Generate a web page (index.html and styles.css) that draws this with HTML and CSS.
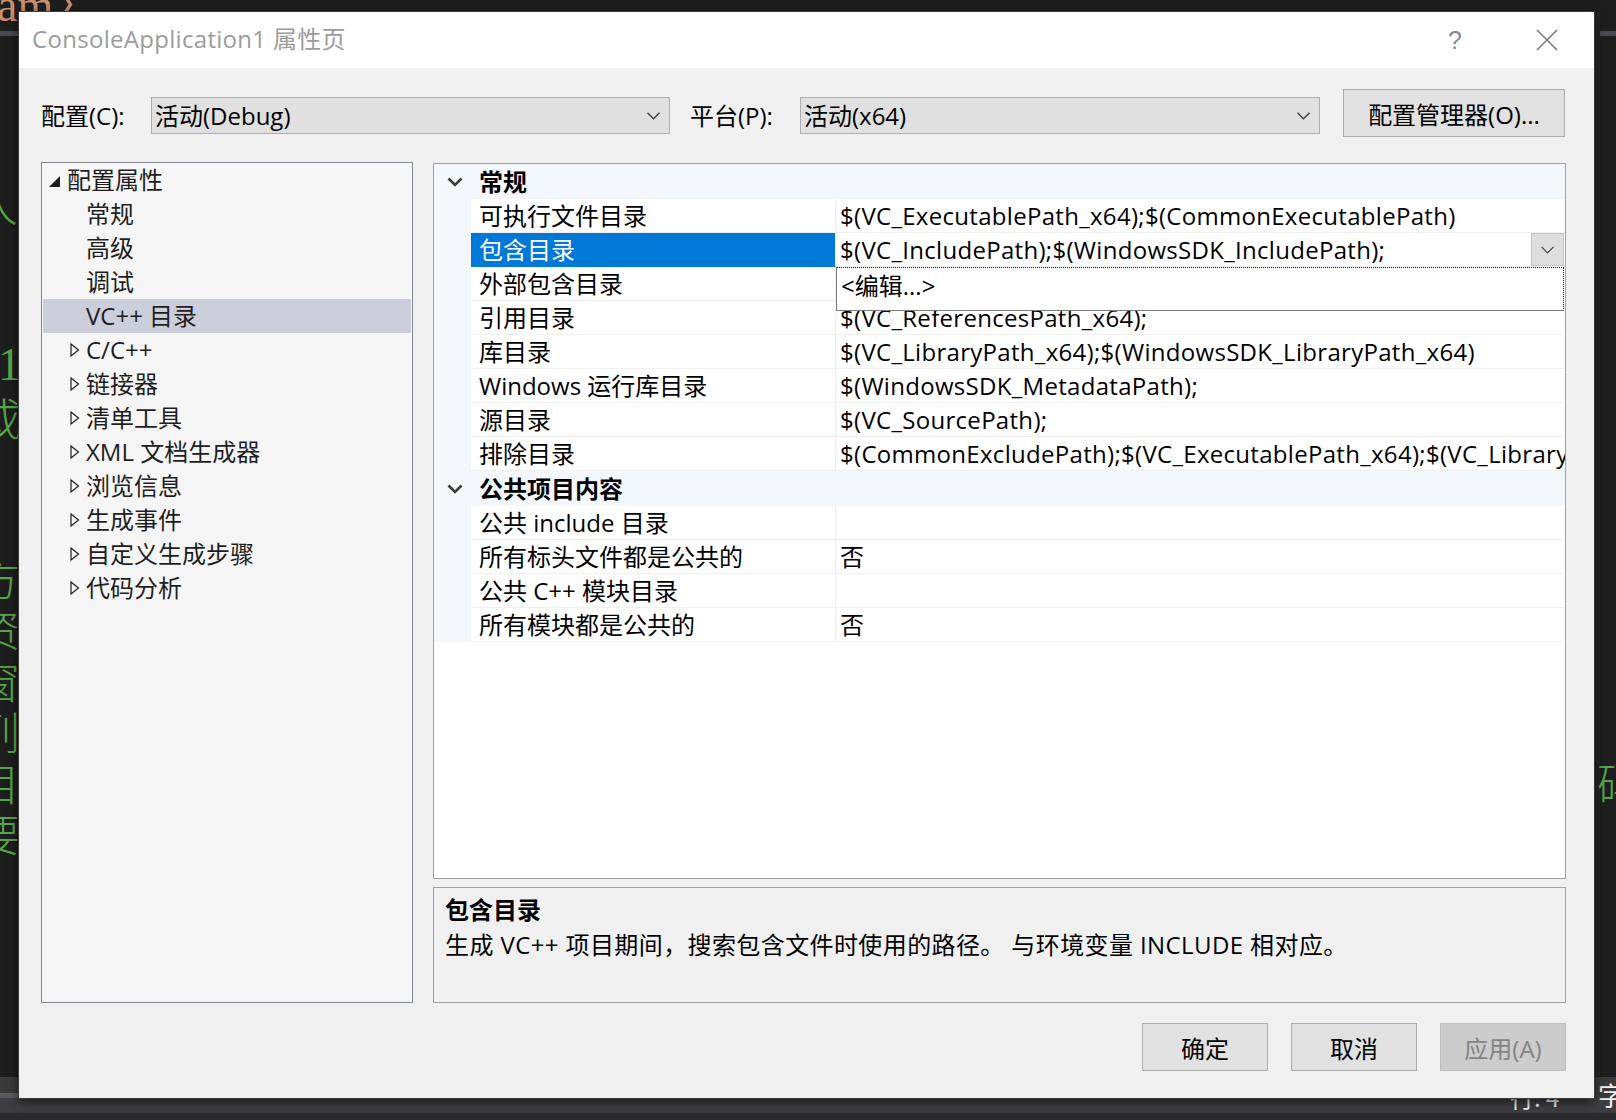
FILE: index.html
```html
<!DOCTYPE html>
<html lang="zh-CN">
<head>
<meta charset="utf-8">
<title>ConsoleApplication1 属性页</title>
<link rel="stylesheet" href="styles.css">
</head>
<body>
<div class="desktop">
  <div class="editor">
    <span class="crumb">am〉</span>
    <div class="tabline tabline-left"></div>
    <div class="tabline tabline-right"></div>
    <div class="rightcol"></div>
    <span class="gch" style="top:178px;left:-26px">人</span>
    <span class="gch lat" style="top:340px;left:-2px">1</span>
    <span class="gch" style="top:392px;left:-22px">或</span>
    <span class="gch" style="top:552px;left:-24px">方</span>
    <span class="gch" style="top:603px;left:-24px">资</span>
    <span class="gch" style="top:655px;left:-24px">窗</span>
    <span class="gch" style="top:706px;left:-24px">列</span>
    <span class="gch" style="top:757px;left:-24px">目</span>
    <span class="gch" style="top:808px;left:-24px">要</span>
    <span class="gch" style="top:757px;left:1597px">码</span>
    <div class="hscroll"><div class="thumb"></div></div>
    <div class="statusbar">
      <span class="st-line">行: 4</span>
      <span class="st-char">字</span>
    </div>
  </div>

  <div class="dialog">
    <div class="titlebar">
      <span class="title">ConsoleApplication1 属性页</span>
      <span class="help">?</span>
      <span class="close"><svg width="22" height="22" viewBox="0 0 22 22"><path d="M1 1 L21 21 M21 1 L1 21" stroke="#7a7a7a" stroke-width="1.6" fill="none"/></svg></span>
    </div>

    <div class="body">
      <div class="config-row">
        <span class="lbl">配置(C):</span>
        <div class="combo combo-1"><span>活动(Debug)</span><svg class="caret" width="13" height="8" viewBox="0 0 13 8"><polyline points="0.5,0.8 6.5,6.8 12.5,0.8" fill="none" stroke="#3a3a3a" stroke-width="1.3"/></svg></div>
        <span class="lbl lbl-2">平台(P):</span>
        <div class="combo combo-2"><span>活动(x64)</span><svg class="caret" width="13" height="8" viewBox="0 0 13 8"><polyline points="0.5,0.8 6.5,6.8 12.5,0.8" fill="none" stroke="#3a3a3a" stroke-width="1.3"/></svg></div>
        <button class="btn btn-cfg">配置管理器(O)...</button>
      </div>

      <div class="main">
        <div class="tree">
          <div class="trow l0"><svg class="tri-open" width="11" height="11" viewBox="0 0 11 11"><polygon points="11,0 11,11 0,11" fill="#1e1e1e"/></svg><span>配置属性</span></div>
          <div class="trow l1 leaf"><span>常规</span></div>
          <div class="trow l1 leaf"><span>高级</span></div>
          <div class="trow l1 leaf"><span>调试</span></div>
          <div class="trow l1 leaf sel"><span>VC++ 目录</span></div>
          <div class="trow l1"><svg class="tri" width="10" height="14" viewBox="0 0 10 14"><polygon points="1,1 8.5,7 1,13" fill="none" stroke="#1e1e1e" stroke-width="1.2"/></svg><span>C/C++</span></div>
          <div class="trow l1"><svg class="tri" width="10" height="14" viewBox="0 0 10 14"><polygon points="1,1 8.5,7 1,13" fill="none" stroke="#1e1e1e" stroke-width="1.2"/></svg><span>链接器</span></div>
          <div class="trow l1"><svg class="tri" width="10" height="14" viewBox="0 0 10 14"><polygon points="1,1 8.5,7 1,13" fill="none" stroke="#1e1e1e" stroke-width="1.2"/></svg><span>清单工具</span></div>
          <div class="trow l1"><svg class="tri" width="10" height="14" viewBox="0 0 10 14"><polygon points="1,1 8.5,7 1,13" fill="none" stroke="#1e1e1e" stroke-width="1.2"/></svg><span>XML 文档生成器</span></div>
          <div class="trow l1"><svg class="tri" width="10" height="14" viewBox="0 0 10 14"><polygon points="1,1 8.5,7 1,13" fill="none" stroke="#1e1e1e" stroke-width="1.2"/></svg><span>浏览信息</span></div>
          <div class="trow l1"><svg class="tri" width="10" height="14" viewBox="0 0 10 14"><polygon points="1,1 8.5,7 1,13" fill="none" stroke="#1e1e1e" stroke-width="1.2"/></svg><span>生成事件</span></div>
          <div class="trow l1"><svg class="tri" width="10" height="14" viewBox="0 0 10 14"><polygon points="1,1 8.5,7 1,13" fill="none" stroke="#1e1e1e" stroke-width="1.2"/></svg><span>自定义生成步骤</span></div>
          <div class="trow l1"><svg class="tri" width="10" height="14" viewBox="0 0 10 14"><polygon points="1,1 8.5,7 1,13" fill="none" stroke="#1e1e1e" stroke-width="1.2"/></svg><span>代码分析</span></div>
        </div>

        <div class="right">
          <div class="grid">
            <div class="grow head">
              <div class="gut"><svg width="16" height="10" viewBox="0 0 16 10"><polyline points="1.5,1.5 8,8 14.5,1.5" fill="none" stroke="#3c3c3c" stroke-width="2.6"/></svg></div>
              <div class="hname">常规</div>
            </div>
            <div class="grow"><div class="gut"></div><div class="name">可执行文件目录</div><div class="val">$(VC_ExecutablePath_x64);$(CommonExecutablePath)</div></div>
            <div class="grow"><div class="gut"></div><div class="name selected">包含目录</div><div class="val"><span class="vtext">$(VC_IncludePath);$(WindowsSDK_IncludePath);</span><span class="ddbtn"><svg width="13" height="8" viewBox="0 0 13 8"><polyline points="0.5,0.8 6.5,6.8 12.5,0.8" fill="none" stroke="#444" stroke-width="1.2"/></svg></span></div></div>
            <div class="grow"><div class="gut"></div><div class="name">外部包含目录</div><div class="val">$(VC_IncludePath);$(WindowsSDK_IncludePath);</div></div>
            <div class="grow"><div class="gut"></div><div class="name">引用目录</div><div class="val">$(VC_ReferencesPath_x64);</div></div>
            <div class="grow"><div class="gut"></div><div class="name">库目录</div><div class="val">$(VC_LibraryPath_x64);$(WindowsSDK_LibraryPath_x64)</div></div>
            <div class="grow"><div class="gut"></div><div class="name">Windows 运行库目录</div><div class="val">$(WindowsSDK_MetadataPath);</div></div>
            <div class="grow"><div class="gut"></div><div class="name">源目录</div><div class="val">$(VC_SourcePath);</div></div>
            <div class="grow"><div class="gut"></div><div class="name">排除目录</div><div class="val">$(CommonExcludePath);$(VC_ExecutablePath_x64);$(VC_LibraryPath_x64);</div></div>
            <div class="grow head">
              <div class="gut"><svg width="16" height="10" viewBox="0 0 16 10"><polyline points="1.5,1.5 8,8 14.5,1.5" fill="none" stroke="#3c3c3c" stroke-width="2.6"/></svg></div>
              <div class="hname">公共项目内容</div>
            </div>
            <div class="grow"><div class="gut"></div><div class="name">公共 include 目录</div><div class="val"></div></div>
            <div class="grow"><div class="gut"></div><div class="name">所有标头文件都是公共的</div><div class="val">否</div></div>
            <div class="grow"><div class="gut"></div><div class="name">公共 C++ 模块目录</div><div class="val"></div></div>
            <div class="grow"><div class="gut"></div><div class="name">所有模块都是公共的</div><div class="val">否</div></div>

            <div class="popup"><span>&lt;编辑...&gt;</span></div>
          </div>

          <div class="desc">
            <div class="desc-title">包含目录</div>
            <div class="desc-text">生成 VC++ 项目期间，搜索包含文件时使用的路径。 与环境变量 INCLUDE 相对应。</div>
          </div>
        </div>
      </div>

      <div class="buttons">
        <button class="btn btn-ok">确定</button>
        <button class="btn btn-ok">取消</button>
        <button class="btn btn-ok disabled">应用(A)</button>
      </div>
    </div>
  </div>
</div>
</body>
</html>
```

FILE: styles.css
```css
* { box-sizing: border-box; }

html, body {
  margin: 0;
  padding: 0;
  width: 1616px;
  height: 1120px;
  overflow: hidden;
  background: #1e1e1e;
}

.desktop {
  position: relative;
  width: 1616px;
  height: 1120px;
  overflow: hidden;
  background: #1e1e1e;
  font-family: "Open Sans", "Noto Sans CJK SC", sans-serif;
}

/* ---------- editor behind the dialog ---------- */
.editor { position: absolute; inset: 0; }

.crumb {
  position: absolute;
  left: -3px;
  top: -22px;
  font-family: "Liberation Serif", "Noto Sans CJK SC", serif;
  font-size: 46px;
  line-height: 56px;
  color: #c98f6e;
}

.tabline {
  position: absolute;
  top: 31px;
  height: 5px;
  background: #4b4b4f;
}
.tabline-left { left: 0; width: 20px; }
.tabline-right { left: 1596px; width: 20px; }

.rightcol {
  position: absolute;
  left: 1594px;
  top: 12px;
  width: 6px;
  height: 1064px;
  background: #262626;
}

.gch {
  position: absolute;
  font-family: "Noto Sans CJK SC", sans-serif;
  font-weight: 300;
  font-size: 44px;
  line-height: 50px;
  color: #57a64a;
}
.gch.lat { font-family: "Liberation Serif", serif; font-size: 46px; }

.hscroll {
  position: absolute;
  left: 0;
  top: 1077px;
  width: 1616px;
  height: 21px;
  background: #3a3a3a;
}
.hscroll .thumb {
  position: absolute;
  left: 0;
  top: 16px;
  width: 44px;
  height: 10px;
  background: #5a5a5a;
}

.statusbar {
  position: absolute;
  left: 0;
  top: 1098px;
  width: 1616px;
  height: 22px;
  background: #3e3e42;
  border-bottom: 7px solid #2b2b2d;
}
.st-line {
  position: absolute;
  left: 1510px;
  top: -16px;
  font-family: "Noto Sans CJK SC", sans-serif;
  font-size: 24px;
  line-height: 30px;
  color: #f1f1f1;
}
.st-char {
  position: absolute;
  left: 1598px;
  top: -18px;
  font-family: "Noto Sans CJK SC", sans-serif;
  font-size: 26px;
  line-height: 30px;
  color: #f1f1f1;
}

/* ---------- dialog ---------- */
.dialog {
  position: absolute;
  left: 19px;
  top: 12px;
  width: 1575px;
  height: 1086px;
  background: #f0f0f0;
  display: flex;
  flex-direction: column;
  box-shadow: 0 0 0 1px #3a3a3a, 0 3px 10px rgba(0, 0, 0, 0.7);
  z-index: 2;
  color: #000;
  font-size: 24px;
}

.titlebar {
  height: 56px;
  flex: none;
  background: #ffffff;
  display: flex;
  align-items: center;
  padding-left: 13px;
}
.title {
  flex: 1;
  color: #9b9b9b;
  font-size: 24px;
  letter-spacing: 0.3px;
  line-height: 32px;
  padding-bottom: 2px;
}
.help {
  width: 40px;
  text-align: center;
  color: #8a8a8a;
  font-family: "Liberation Sans", sans-serif;
  font-size: 25px;
  font-weight: 300;
  line-height: 30px;
}
.close {
  width: 60px;
  margin-left: 42px;
  margin-right: 17px;
  display: flex;
  justify-content: center;
  align-items: center;
}

.body {
  flex: 1;
  min-height: 0;
  display: flex;
  flex-direction: column;
  padding: 21px 28px 27px 22px;
}

/* config row */
.config-row {
  height: 48px;
  flex: none;
  display: flex;
  align-items: flex-start;
}
.lbl {
  width: 110px;
  height: 37px;
  margin-top: 8px;
  line-height: 37px;
  white-space: nowrap;
}
.lbl-2 { margin-left: 20px; }
.combo {
  height: 37px;
  margin-top: 8px;
  background: #e0e0e0;
  border: 1px solid #adadad;
  display: flex;
  align-items: center;
  justify-content: space-between;
  padding: 0 9px 0 3px;
  line-height: 35px;
}
.combo-1 { width: 519px; }
.combo-2 { width: 520px; }
.caret { flex: none; }

.btn {
  font-family: "Open Sans", "Noto Sans CJK SC", sans-serif;
  font-size: 24px;
  color: #000;
  background: #e1e1e1;
  border: 1px solid #adadad;
  padding: 0;
  margin: 0;
  height: 48px;
}
.btn-cfg {
  width: 222px;
  margin-left: 23px;
}

/* main */
.main {
  height: 841px;
  flex: none;
  margin-top: 25px;
  display: flex;
  gap: 20px;
  min-width: 0;
}

.tree {
  width: 372px;
  flex: none;
  background: #f5f5f5;
  border: 1px solid #828790;
  padding: 0 1px;
}
.trow {
  height: 34px;
  display: flex;
  align-items: center;
  white-space: nowrap;
  line-height: 34px;
  color: #1e1e1e;
}
.trow.l0 { padding-left: 6px; }
.trow.l0 .tri-open { margin-right: 7px; margin-top: 2px; }
.trow.l1 { padding-left: 27px; }
.trow.l1 .tri { margin-right: 6px; }
.trow.leaf { padding-left: 43px; }
.trow.sel { background: #cccedb; }

.right {
  flex: 1;
  min-width: 0;
  display: flex;
  flex-direction: column;
  margin-top: 1px;
}

.grid {
  position: relative;
  height: 716px;
  flex: none;
  background: #ffffff;
  border: 1px solid #a0a0a0;
  overflow: hidden;
}
.grow {
  display: flex;
  height: 34px;
  line-height: 33px;
  white-space: nowrap;
}
.grow.head {
  height: 35px;
  background: #f3f6fb;
  font-weight: 700;
  line-height: 35px;
}
.gut {
  width: 37px;
  flex: none;
  background: #f3f6fb;
  display: flex;
  align-items: center;
  justify-content: center;
  padding-left: 4px;
}
.hname { padding-left: 8px; }
.name {
  width: 365px;
  flex: none;
  padding-left: 8px;
  border-bottom: 1px solid #f0f0f0;
  border-right: 1px solid #f0f0f0;
}
.name.selected {
  background: #0078d7;
  color: #ffffff;
  border-bottom-color: #0078d7;
}
.val {
  flex: 1;
  min-width: 0;
  padding-left: 4px;
  border-bottom: 1px solid #f0f0f0;
  overflow: hidden;
  display: flex;
  align-items: stretch;
  letter-spacing: 0.3px;
}
.vtext { flex: 1; min-width: 0; overflow: hidden; }
.ddbtn {
  width: 33px;
  flex: none;
  margin-right: 1px;
  background: #dedede;
  border: 1px solid #c4c4c4;
  display: flex;
  align-items: center;
  justify-content: center;
}

.popup {
  position: absolute;
  left: 402px;
  top: 103px;
  width: 728px;
  height: 44px;
  background: #ffffff;
  border-left: 1px solid #7a7a7a;
  border-bottom: 1px solid #7a7a7a;
  border-top: 1px dotted #222;
  border-right: 1px dotted #222;
  padding-left: 4px;
  line-height: 36px;
  z-index: 3;
}

.desc {
  height: 116px;
  flex: none;
  margin-top: 8px;
  border: 1px solid #a0a0a0;
  background: #f0f0f0;
  padding: 4px 11px;
}
.desc-title { font-weight: 700; line-height: 35px; }
.desc-text { line-height: 35px; white-space: nowrap; letter-spacing: 0.4px; }

.buttons {
  flex: none;
  margin-top: 20px;
  height: 48px;
  display: flex;
  justify-content: flex-end;
  gap: 23px;
}
.btn-ok { width: 126px; }
.btn.disabled {
  background: #cccccc;
  border-color: #bfbfbf;
  color: #838383;
}
```
